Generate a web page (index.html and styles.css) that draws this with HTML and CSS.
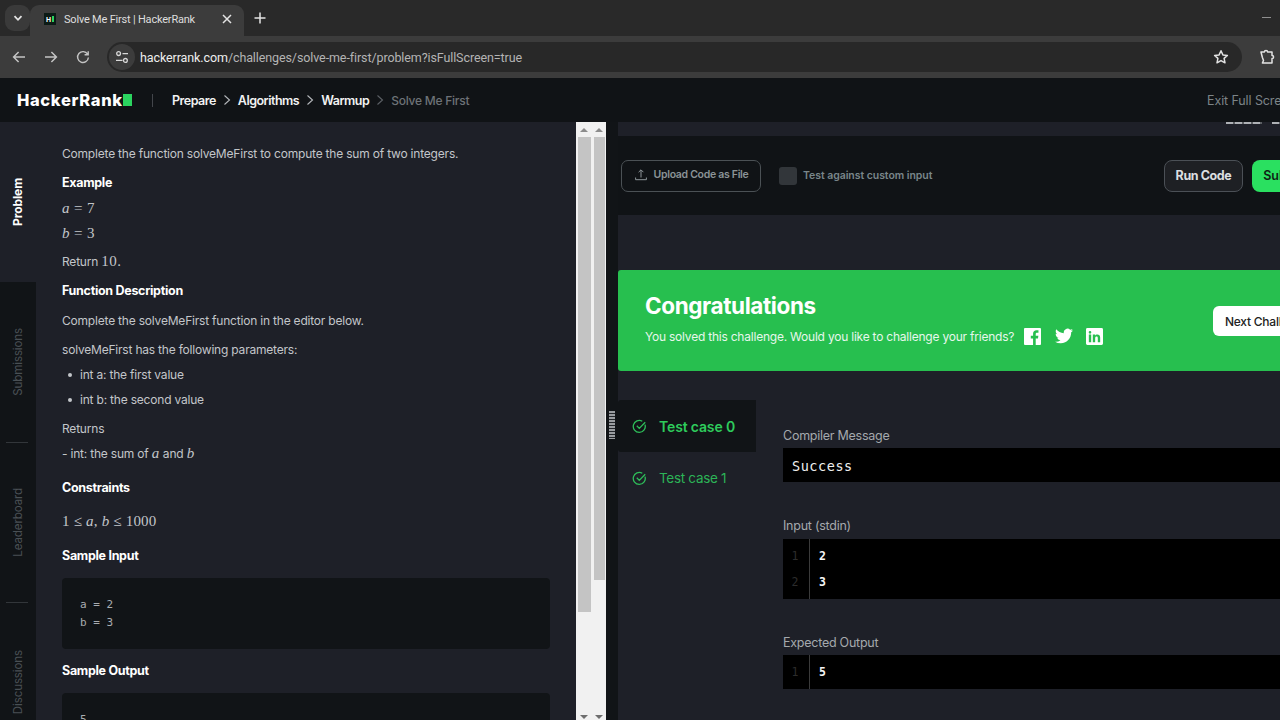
FILE: index.html
```html
<!DOCTYPE html>
<html lang="en">
<head>
<meta charset="utf-8">
<title>Solve Me First | HackerRank</title>
<link rel="stylesheet" href="styles.css">
</head>
<body>
<div class="page">
  <header class="tabstrip">
    <button class="tabsearch"><svg width="12" height="12" viewBox="0 0 12 12"><path d="M2.500 4.200 6 7.800l3.500-3.600" fill="none" stroke="#e3e3e3" stroke-width="1.800"/></svg></button>
    <div class="tab">
      <span class="favicon"><span class="fav-h">H</span><span class="fav-b"></span></span>
      <span class="tab-title">Solve Me First | HackerRank</span>
      <svg class="tab-x" width="10" height="10" viewBox="0 0 10 10"><path d="M1 1l8 8M9 1l-8 8" stroke="#e3e3e3" stroke-width="1.500"/></svg>
    </div>
    <svg class="newtab" width="12" height="12" viewBox="0 0 12 12"><path d="M6 .5v11M.5 6h11" stroke="#e3e3e3" stroke-width="1.500"/></svg>
    <span class="minimize"></span>
  </header>
  <div class="toolbar">
    <svg class="tool" width="14" height="14" viewBox="0 0 14 14"><path d="M13 7H1.600M6.600 2 1.600 7l5 5" fill="none" stroke="#c4c4c4" stroke-width="1.500"/></svg>
    <svg class="tool" width="14" height="14" viewBox="0 0 14 14"><path d="M1 7h11.400M7.400 2l5 5-5 5" fill="none" stroke="#c4c4c4" stroke-width="1.500"/></svg>
    <svg class="tool" width="14" height="14" viewBox="0 0 14 14"><path d="M11.600 4.200A5.400 5.400 0 1 0 12.400 7.500M12.200 1.200v3.600H8.600" fill="none" stroke="#c4c4c4" stroke-width="1.400"/></svg>
    <div class="omnibox">
      <span class="site"><svg width="14" height="14" viewBox="0 0 14 14"><g fill="none" stroke="#d8d8d8" stroke-width="1.300"><circle cx="3.600" cy="3.600" r="1.900"/><circle cx="10.400" cy="10.400" r="1.900"/><path d="M7.500 3.600H13M1 10.400h6.500"/></g></svg></span>
      <span class="url"><span class="host">hackerrank.com</span>/challenges/solve-me-first/problem?isFullScreen=true</span>
      <svg class="star" width="16" height="16" viewBox="0 0 16 16"><path d="m8 1.800 1.900 4.100 4.500.5-3.300 3 .9 4.400L8 11.600l-4 2.200.9-4.400-3.300-3 4.500-.5z" fill="none" stroke="#e3e3e3" stroke-width="1.500" stroke-linejoin="round"/></svg>
    </div>
    <svg class="puzzle" width="16" height="16" viewBox="0 0 16 16"><path d="M2 3h3.400a1.600 1.600 0 0 1 3.200 0H13v3.400a1.600 1.600 0 0 1 0 3.200V14H3.400L4.500 11.500 3.400 8.500z" fill="none" stroke="#e3e3e3" stroke-width="1.500" stroke-linejoin="round"/></svg>
  </div>
  <nav class="sitenav">
    <span class="logo">HackerRank<span class="logo-block"></span></span>
    <span class="navsep"></span>
    <span class="crumb">Prepare</span><svg class="chev" width="8" height="12" viewBox="0 0 8 12"><path d="m1.500 1.500 5 4.500-5 4.500" fill="none" stroke="#b5b8bc" stroke-width="1.100"/></svg>
    <span class="crumb">Algorithms</span><svg class="chev" width="8" height="12" viewBox="0 0 8 12"><path d="m1.500 1.500 5 4.500-5 4.500" fill="none" stroke="#b5b8bc" stroke-width="1.100"/></svg>
    <span class="crumb">Warmup</span><svg class="chev" width="8" height="12" viewBox="0 0 8 12"><path d="m1.500 1.500 5 4.500-5 4.500" fill="none" stroke="#5c6066" stroke-width="1.100"/></svg>
    <span class="crumb current">Solve Me First</span>
    <span class="exit">Exit Full Screen</span>
  </nav>
  <main class="workspace">
    <aside class="sidetabs">
      <div class="sidetab active"><span>Problem</span></div>
      <div class="sidetab"><span>Submissions</span></div>
      <div class="sidetab ruled"><span>Leaderboard</span></div>
      <div class="sidetab ruled"><span>Discussions</span></div>
    </aside>
    <section class="problem">
      <p class="text first">Complete the function solveMeFirst to compute the sum of two integers.</p>
      <h3 class="head g9">Example</h3>
      <p class="text g5 math"><i>a</i> = 7</p>
      <p class="text g5 math"><i>b</i> = 3</p>
      <p class="text g9">Return <span class="math">10.</span></p>
      <h3 class="head g9">Function Description</h3>
      <p class="text g10">Complete the solveMeFirst function in the editor below.</p>
      <p class="text g9">solveMeFirst has the following parameters:</p>
      <ul class="params">
        <li class="text g5">int a: the first value</li>
        <li class="text g5">int b: the second value</li>
      </ul>
      <p class="text g9">Returns</p>
      <p class="text g5">- int: the sum of <i class="math">a</i> and <i class="math">b</i></p>
      <h3 class="head g14">Constraints</h3>
      <p class="text g13 math wide">1 ≤ <i>a</i>, <i>b</i> ≤ 1000</p>
      <h3 class="head g15">Sample Input</h3>
      <pre class="sample g12">a = 2
b = 3</pre>
      <h3 class="head g12">Sample Output</h3>
      <pre class="sample g12">5</pre>
    </section>
    <div class="scrolls">
      <div class="scroll"><span class="arrow up"></span><span class="thumb t1"></span><span class="arrow down"></span></div>
      <div class="scroll"><span class="arrow up"></span><span class="thumb t2"></span><span class="arrow down"></span></div>
    </div>
    <div class="gutter"><span class="grip"></span></div>
    <section class="editor">
      <div class="strip"><span class="clip clip-a"></span><span class="clip clip-b"></span></div>
      <div class="actions">
        <button class="upload"><svg width="14" height="14" viewBox="0 0 14 14"><path d="M7 9.500V2M4.600 4.200 7 1.800l2.400 2.400M1.600 9.500v2.200h10.800V9.500" fill="none" stroke="#8d9599" stroke-width="1"/></svg>Upload Code as File</button>
        <span class="check"></span>
        <span class="custom">Test against custom input</span>
        <button class="run">Run Code</button>
        <button class="submit">Submit Code</button>
      </div>
      <div class="results">
        <div class="banner">
          <div class="banner-text">
            <h2>Congratulations</h2>
            <div class="share">
              <span>You solved this challenge. Would you like to challenge your friends?</span>
              <svg class="fb" width="18" height="18" viewBox="0 0 18 18"><path fill="#fff" d="M1 0h16a1 1 0 0 1 1 1v16a1 1 0 0 1-1 1h-4.600v-7h2.400l.4-2.800h-2.800V6.400c0-.8.3-1.400 1.400-1.400h1.500V2.500c-.3 0-1.100-.1-2.100-.1-2.200 0-3.600 1.300-3.600 3.700v2.100H7.200V11h2.400v7H1a1 1 0 0 1-1-1V1a1 1 0 0 1 1-1z"/></svg>
              <svg class="tw" width="18" height="18" viewBox="0 0 24 24"><path fill="#fff" d="M23.950 4.570a10 10 0 0 1-2.820.77 4.960 4.960 0 0 0 2.160-2.720c-.95.55-2 .96-3.130 1.190a4.920 4.920 0 0 0-8.380 4.480C7.690 8.090 4.070 6.130 1.640 3.160a4.820 4.820 0 0 0-.67 2.480c0 1.710.87 3.210 2.190 4.100a4.900 4.900 0 0 1-2.230-.616v.06a4.920 4.920 0 0 0 3.950 4.830 5 5 0 0 1-2.210.085 4.940 4.940 0 0 0 4.600 3.420A9.870 9.870 0 0 1 0 19.540a14 14 0 0 0 7.560 2.210c9.050 0 14-7.500 14-13.980 0-.21 0-.42-.015-.63a9.940 9.940 0 0 0 2.460-2.550z"/></svg>
              <svg class="li" width="18" height="18" viewBox="0 0 18 18"><path fill="#fff" fill-rule="evenodd" d="M1.500 0h15A1.500 1.500 0 0 1 18 1.500v15a1.500 1.500 0 0 1-1.500 1.500h-15A1.500 1.500 0 0 1 0 16.500v-15A1.500 1.500 0 0 1 1.500 0zM3 7v8h2.500V7zm1.250-3.800a1.400 1.400 0 1 0 0 2.800 1.400 1.400 0 0 0 0-2.800zM7.200 7v8h2.500v-4.200c0-1.100.5-1.800 1.500-1.800s1.300.7 1.300 1.800V15H15v-4.800c0-2.200-1.200-3.400-3-3.400-1.100 0-1.900.5-2.300 1.200V7z"/></svg>
            </div>
          </div>
          <button class="next">Next Challenge</button>
        </div>
        <div class="cases">
          <div class="case-list">
            <div class="case active"><svg width="15" height="15" viewBox="0 0 15 15"><path d="M13 5.600A6 6 0 1 1 10.300 2.200M4.800 6.800l2.500 2.600 5.900-6.200" fill="none" stroke="#2ebd59" stroke-width="1.300"/></svg><span>Test case 0</span></div>
            <div class="case"><svg width="15" height="15" viewBox="0 0 15 15"><path d="M13 5.600A6 6 0 1 1 10.300 2.200M4.800 6.800l2.500 2.600 5.900-6.200" fill="none" stroke="#2ebd59" stroke-width="1.300"/></svg><span>Test case 1</span></div>
          </div>
          <div class="case-detail">
            <div class="label first-label"><span>Compiler Message</span></div>
            <div class="output message">Success</div>
            <div class="label input-label"><span>Input (stdin)</span><a>Download</a></div>
            <div class="output code">
              <div class="nums"><span>1</span><span>2</span></div>
              <div class="vals"><span>2</span><span>3</span></div>
            </div>
            <div class="label expected-label"><span>Expected Output</span><a>Download</a></div>
            <div class="output code">
              <div class="nums"><span>1</span></div>
              <div class="vals"><span>5</span></div>
            </div>
          </div>
        </div>
      </div>
    </section>
  </main>
</div>
</body>
</html>
```
FILE: styles.css
```css
* { box-sizing: border-box; }
html, body { margin: 0; height: 100%; overflow: hidden; background: #1e2028; }
body { font-family: Inter, "Liberation Sans", sans-serif; }
button { font-family: inherit; }
.page { width: 1280px; height: 720px; display: flex; flex-direction: column; overflow: hidden; }

.tabstrip { height: 36px; flex: none; background: #292929; display: flex; align-items: flex-end; position: relative; padding-left: 5px; }
.tabsearch { width: 25px; height: 26px; margin-bottom: 5px; border: 0; border-radius: 9px; background: #3a3a3a; padding: 0; display: flex; align-items: center; justify-content: center; }
.tab { width: 214px; height: 31px; background: #3c3c3c; border-radius: 9px 9px 0 0; display: flex; align-items: center; padding: 0 12px 3px 14px; flex: none; }
.favicon { width: 12px; height: 12px; background: #0c1b16; display: flex; align-items: center; justify-content: center; gap: 1px; flex: none; }
.fav-h { color: #fff; font: 700 7px/1 "Liberation Sans", sans-serif; }
.fav-b { width: 2px; height: 6px; background: #27d35f; }
.tab-title { color: #dedede; font-size: 11px; letter-spacing: -.2px; margin-left: 8px; white-space: nowrap; flex: 1; font-family: Roboto, sans-serif; }
.newtab { margin: 0 0 12px 10px; }
.minimize { position: absolute; right: 9px; top: 17px; width: 9px; height: 1px; background: #8f8f8f; }

.toolbar { height: 42px; flex: none; background: #3c3c3c; display: flex; align-items: center; padding-left: 12px; position: relative; }
.tool { margin-right: 18px; flex: none; }
.omnibox { width: 1135px; height: 30px; margin-left: -1px; background: #282828; border-radius: 15px; display: flex; align-items: center; flex: none; }
.site { width: 26px; height: 26px; margin-left: 2px; border-radius: 50%; background: #3c3c3c; display: flex; align-items: center; justify-content: center; flex: none; }
.url { margin-left: 5px; font-size: 12.5px; letter-spacing: -.1px; color: #b4b4b4; white-space: nowrap; flex: 1; font-family: Roboto, sans-serif; }
.host { color: #eeeeee; }
.star { margin-right: 13px; flex: none; }
.puzzle { margin-left: 17px; flex: none; }

.sitenav { width: 1340px; height: 44px; flex: none; background: #101316; display: flex; align-items: center; padding-left: 17px; }
.logo { color: #fff; font-weight: 800; font-size: 16.5px; letter-spacing: .65px; display: flex; align-items: center; width: 116px; white-space: nowrap; }
.logo-block { width: 9px; height: 12px; background: #2bd45f; flex: none; }
.navsep { width: 1px; height: 13px; background: #43464b; margin: 0 19px; }
.crumb { color: #f2f2f2; font-size: 12.5px; font-weight: 600; letter-spacing: -.5px; white-space: nowrap; }
.crumb.current { color: #6d7277; font-weight: 500; font-size: 12px; letter-spacing: -.25px; }
.chev { margin: 0 7px; flex: none; }
.exit { margin-left: auto; margin-right: 18px; color: #7c8488; font-size: 12.5px; white-space: nowrap; width: 115px; letter-spacing: -.1px; }

.workspace { flex: 1; display: flex; min-height: 0; }
.sidetabs { width: 36px; flex: none; background: #111417; display: flex; flex-direction: column; overflow: hidden; }
.sidetab { height: 160px; flex: none; display: flex; align-items: center; justify-content: center; position: relative; color: #4a5055; font-size: 11.5px; letter-spacing: -.1px; padding-right: 1px; }
.sidetab span { writing-mode: vertical-rl; transform: rotate(180deg); }
.sidetab.active { background: #1e2028; color: #fff; font-weight: 700; font-size: 12px; }
.sidetab.ruled::before { content: ""; position: absolute; top: 0; left: 6px; width: 22px; height: 1px; background: #32363a; }

.problem { width: 540px; flex: none; padding: 0 26px; background: #1e2028; overflow: hidden; }
.problem p, .problem h3, .problem pre, .problem ul { margin: 0; }
.text { font-size: 12px; line-height: 20px; color: #c3c6ca; letter-spacing: -.2px; white-space: nowrap; }
.head { font-size: 12.5px; line-height: 20px; color: #fff; font-weight: 700; letter-spacing: -.3px; }
.math { font-family: "Liberation Serif", serif; font-size: 15px; letter-spacing: .4px; }
.text span.math, .text i.math { line-height: 1; }
.wide { letter-spacing: .2px; }
.first { margin-top: 22px !important; }
.g5 { margin-top: 5px !important; }
.g9 { margin-top: 9px !important; }
.g10 { margin-top: 10px !important; }
.g12 { margin-top: 12px !important; }
.g13 { margin-top: 13px !important; }
.g14 { margin-top: 14px !important; }
.g15 { margin-top: 15px !important; }
.params { padding: 0 0 0 18px; list-style: none; }
.params li { position: relative; }
.params li::before { content: ""; position: absolute; left: -12px; top: 8px; width: 4px; height: 4px; border-radius: 50%; background: #c3c6ca; }
.sample { height: 71px; background: #111417; border-radius: 4px; padding: 18px 18px; font: 11px/18px "DejaVu Sans Mono", monospace; color: #a9adb1; }

.scrolls { width: 30px; flex: none; display: flex; background: #f1f1f1; padding-left: 1px; }
.scroll { flex: 1; position: relative; padding-top: 15px; }
.thumb { display: block; margin: 0 1px; background: #c4c4c4; }
.t1 { height: 475px; }
.t2 { height: 443px; margin-left: 2px; }
.arrow { position: absolute; left: 50%; margin-left: -4px; width: 0; height: 0; border-left: 4px solid transparent; border-right: 4px solid transparent; }
.arrow.up { top: 6px; border-bottom: 4px solid #8c8c8c; }
.arrow.down { bottom: 1px; border-top: 4px solid #6e6e6e; }

.gutter { width: 12px; flex: none; background: #111417; display: flex; justify-content: center; padding-top: 289px; }
.grip { width: 6px; height: 28px; background: repeating-linear-gradient(to bottom, #9a9da1 0 2px, #24272b 2px 3px); }

.editor { width: 810px; flex: none; display: flex; flex-direction: column; background: #101316; }
.strip { height: 14px; background: #1e2028; flex: none; display: flex; align-items: flex-start; padding-left: 608px; gap: 10px; }
.clip { height: 2px; background: repeating-linear-gradient(to right, #aeb1b5 0 7px, #5c5f63 7px 9px); }
.clip-a { width: 36px; }
.clip-b { width: 9px; }
.actions { height: 79px; flex: none; display: flex; align-items: center; padding: 0 0 0 3px; }
.upload { width: 140px; height: 32px; border: 1px solid #4b5155; border-radius: 7px; background: transparent; color: #8b9397; font-size: 10.5px; font-weight: 600; letter-spacing: -.3px; display: flex; align-items: center; justify-content: center; gap: 6px; padding: 0 0 2px; white-space: nowrap; }
.check { width: 18px; height: 18px; border-radius: 3px; background: #32363a; margin-left: 18px; flex: none; }
.custom { margin-left: 6px; color: #79868a; font-size: 10.5px; font-weight: 600; white-space: nowrap; flex: none; width: 361px; letter-spacing: -.05px; }
.run { width: 79px; height: 32px; border: 1px solid #4b5056; border-radius: 8px; background: #1e2024; color: #dcdee0; font-size: 12.5px; font-weight: 700; letter-spacing: -.4px; padding: 0; flex: none; }
.submit { width: 100px; height: 32px; margin-left: 9px; border: 0; border-radius: 8px; background: #2ae060; color: #0f1f14; font-size: 12.5px; font-weight: 600; padding: 0; flex: none; white-space: nowrap; }

.results { flex: 1; background: #1e2028; padding-top: 55px; min-height: 0; overflow: hidden; }
.banner { height: 101px; background: #27bf4f; border-radius: 3px; display: flex; align-items: center; padding: 0 0 4px 27px; position: relative; }
.banner h2 { margin: 0; color: #fff; font-size: 22.500px; line-height: 28px; font-weight: 700; letter-spacing: -.4px; }
.share { display: flex; align-items: center; margin-top: 7px; color: #e6f7eb; font-size: 12px; letter-spacing: -.22px; height: 18px; white-space: nowrap; }
.fb { margin-left: 10px; width: 17px; height: 17px; }
.tw { margin-left: 14px; }
.li { margin-left: 13px; width: 17px; height: 17px; }
.next { position: absolute; left: 595px; top: 36px; width: 130px; height: 30px; border: 0; border-radius: 6px; background: #fff; color: #222; font-size: 12px; font-weight: 500; letter-spacing: -.25px; text-align: left; padding: 0 0 0 12px; white-space: nowrap; }

.cases { display: flex; padding-top: 29px; }
.case-list { width: 138px; flex: none; }
.case { height: 52px; display: flex; align-items: center; padding-left: 14px; gap: 12px; color: #2cb457; font-size: 13.500px; letter-spacing: -.3px; }
.case.active { background: #111417; color: #2ecb5c; font-weight: 600; font-size: 14px; letter-spacing: -.15px; border-radius: 3px 0 0 3px; }
.case-detail { width: 700px; margin-left: 27px; flex: none; }
.label { display: flex; justify-content: space-between; align-items: center; height: 16px; color: #a5a9ad; font-size: 12.500px; letter-spacing: -.25px; white-space: nowrap; padding-right: 197px; }
.label a { color: #5b63d6; font-weight: 600; width: 0; }
.first-label { margin-top: 27px; }
.output { background: #000; color: #f0f0f0; }
.message { height: 34px; margin-top: 5px; padding-left: 9px; font: 13.500px/36px "DejaVu Sans Mono", monospace; letter-spacing: .55px; }
.input-label { margin-top: 35px; }
.expected-label { margin-top: 35px; }
.code { margin-top: 6px; display: flex; font: 700 11.500px/26px "DejaVu Sans Mono", monospace; padding: 4px 0; }
.expected-label + .code { margin-top: 5px; }
.nums { width: 27px; flex: none; border-right: 1px solid #3b3b3b; margin: -4px 0; padding: 4px 2px 4px 0; display: flex; flex-direction: column; align-items: center; color: #2c2c2c; font-weight: 400; }
.vals { display: flex; flex-direction: column; padding-left: 9px; color: #f4f4f4; }
```
